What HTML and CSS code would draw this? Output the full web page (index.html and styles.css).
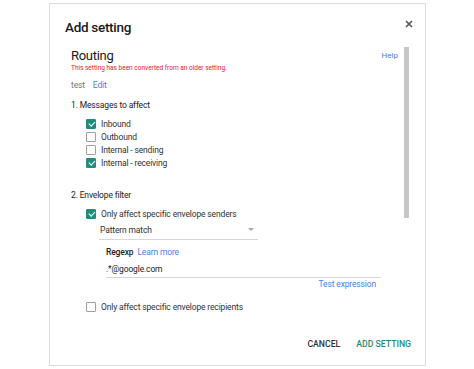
FILE: index.html
```html
<!DOCTYPE html>
<html lang="en">
<head>
    <meta charset="UTF-8">
    <title>Add setting</title>
    <link rel="stylesheet" href="styles.css">
</head>
<body>
    <!-- Dialog -->
    <div class="dialog">
        <header class="dialog-head">
            <h1>Add setting</h1>
            <svg class="close" width="8" height="8" viewBox="0 0 8 8">
                <path d="M1 1 L7 7 M7 1 L1 7" stroke="#555" stroke-width="1.6"/>
            </svg>
        </header>

        <div class="dialog-body">
            <div class="content">
                <div class="title-row">
                    <h2>Routing</h2>
                    <a href="#" class="link help">Help</a>
                </div>
                <p class="warning">This setting has been converted from an older setting.</p>
                <p class="name-row"><span class="name">test</span><a href="#" class="link">Edit</a></p>

                <h3>1. Messages to affect</h3>
                <ul class="checks">
                    <li><span class="box checked"></span>Inbound</li>
                    <li><span class="box"></span>Outbound</li>
                    <li><span class="box"></span>Internal - sending</li>
                    <li><span class="box checked"></span>Internal - receiving</li>
                </ul>

                <h3 class="section-2">2. Envelope filter</h3>
                <ul class="checks">
                    <li><span class="box checked"></span>Only affect specific envelope senders</li>
                </ul>
                <div class="select">
                    <span>Pattern match</span>
                    <span class="arrow"></span>
                </div>
                <div class="regexp">
                    <p class="regexp-label"><b>Regexp</b><a href="#" class="link">Learn more</a></p>
                    <div class="text-input">.*@google.com</div>
                    <p class="test-link"><a href="#" class="link">Test expression</a></p>
                </div>
                <ul class="checks recipients">
                    <li><span class="box"></span>Only affect specific envelope recipients</li>
                </ul>
            </div>
            <div class="scrollbar"><div class="thumb"></div></div>
        </div>

        <footer class="dialog-foot">
            <button class="btn">Cancel</button>
            <button class="btn primary">Add setting</button>
        </footer>
    </div>
</body>
</html>
```

FILE: styles.css
```css
/* Global */
body {
    margin: 0;
    background: #fff;
    font-family: Roboto, 'Liberation Sans', Arial, sans-serif;
    color: #222;
}

p, h1, h2, h3, ul {
    margin: 0;
    padding: 0;
}

.link {
    color: #4a80e0;
    text-decoration: none;
}

/* Dialog frame */
.dialog {
    box-sizing: border-box;
    margin: 3px 0 0 49px;
    width: 377px;
    height: 363px;
    border: 1px solid #dcdcdc;
    display: flex;
    flex-direction: column;
}

.dialog-head {
    display: flex;
    justify-content: space-between;
    align-items: flex-start;
    padding: 13px 12px 9px 15px;
}

.dialog-head h1 {
    font-size: 13.5px;
    line-height: 20px;
    font-weight: 500;
    letter-spacing: -0.3px;
    color: #1a1a1a;
}

.close {
    margin-top: 3px;
}

/* Body with scrollbar */
.dialog-body {
    display: flex;
    padding-left: 21px;
}

.content {
    width: 327px;
    font-size: 8.5px;
    letter-spacing: -0.15px;
}

.scrollbar {
    margin: 1px 0 0 6px;
    width: 5px;
}

.thumb {
    height: 171px;
    background: #c6c6c6;
}

.title-row {
    display: flex;
    justify-content: space-between;
    align-items: center;
    height: 18px;
    margin-top: 1px;
}

.title-row h2 {
    font-size: 13px;
    line-height: 18px;
    font-weight: 400;
    letter-spacing: -0.3px;
    color: #1a1a1a;
}

.help {
    font-size: 8px;
    letter-spacing: 0;
    margin-top: -2px;
}

.warning {
    margin-top: -2px;
    font-size: 6.5px;
    letter-spacing: 0;
    line-height: 10px;
    color: #e5202b;
}

.name-row {
    margin-top: 6px;
    line-height: 12px;
}

.name {
    color: #777;
    margin-right: 8px;
}

h3 {
    margin-top: 8px;
    font-size: 8.5px;
    line-height: 12px;
    font-weight: 400;
    color: #222;
}

h3.section-2 {
    margin-top: 20px;
}

/* Checkboxes */
.checks {
    list-style: none;
    margin-top: 6px;
    padding-left: 15px;
}

.checks li {
    display: flex;
    align-items: center;
    height: 13px;
    color: #333;
}

.box {
    box-sizing: border-box;
    width: 10px;
    height: 10px;
    margin-right: 5px;
    border: 1px solid #a0a0a0;
    border-radius: 1px;
    position: relative;
}

.box.checked {
    background: #1f8d7e;
    border-color: #1f8d7e;
}

.box.checked::after {
    content: "";
    position: absolute;
    left: 2.5px;
    top: 0.5px;
    width: 2.5px;
    height: 5px;
    border: solid #fff;
    border-width: 0 1.3px 1.3px 0;
    transform: rotate(45deg);
}

/* Pattern select */
.select {
    display: flex;
    justify-content: space-between;
    align-items: center;
    margin-left: 28px;
    width: 159px;
    height: 20px;
    padding-left: 1px;
    padding-right: 4px;
    box-sizing: border-box;
    border-bottom: 1px solid #d6d6d6;
    color: #333;
}

.arrow {
    width: 0;
    height: 0;
    border-left: 3px solid transparent;
    border-right: 3px solid transparent;
    border-top: 3px solid #aaa;
}

/* Regexp field */
.regexp {
    margin: 6px 0 0 35px;
    width: 275px;
}

.regexp-label {
    line-height: 12px;
}

.regexp-label b {
    font-weight: 500;
    margin-right: 4px;
}

.text-input {
    margin-top: 3px;
    line-height: 16px;
    border-bottom: 1px solid #d6d6d6;
    color: #222;
}

.test-link {
    text-align: right;
    padding-right: 5px;
    line-height: 12px;
}

.checks.recipients {
    margin-top: 10px;
}

/* Footer buttons */
.dialog-foot {
    margin-top: auto;
    display: flex;
    justify-content: flex-end;
    gap: 16px;
    padding: 0 14px 15px 0;
}

.btn {
    border: none;
    background: none;
    padding: 0;
    font-family: inherit;
    font-size: 8.7px;
    line-height: 12px;
    font-weight: 500;
    text-transform: uppercase;
    color: #333;
}

.btn.primary {
    color: #1f8d74;
}
```
